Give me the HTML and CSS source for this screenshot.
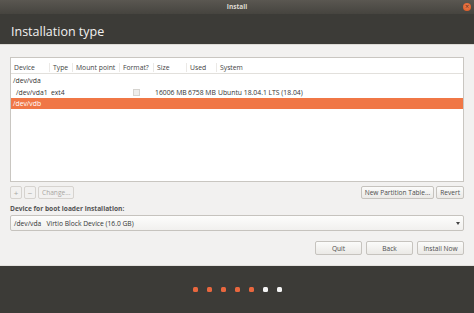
FILE: index.html
```html
<!DOCTYPE html>
<html lang="en">
<head>
    <meta charset="UTF-8">
    <title>Install</title>
    <link rel="stylesheet" href="styles.css">
</head>
<body>
    <div class="window">
        <div class="titlebar">
            <span class="title">Install</span>
            <span class="close">&times;</span>
        </div>
        <div class="header">
            <h1>Installation type</h1>
        </div>

        <div class="content">
            <div class="table">
                <div class="row head">
                    <span class="c-dev">Device</span>
                    <span class="c-type">Type</span>
                    <span class="c-mount">Mount point</span>
                    <span class="c-fmt">Format?</span>
                    <span class="c-size">Size</span>
                    <span class="c-used">Used</span>
                    <span class="c-sys">System</span>
                </div>
                <div class="row">
                    <span class="c-dev">/dev/vda</span>
                </div>
                <div class="row">
                    <span class="c-dev indent">/dev/vda1</span>
                    <span class="c-type">ext4</span>
                    <span class="c-mount"></span>
                    <span class="c-fmt"><i class="check"></i></span>
                    <span class="c-size">16006 MB</span>
                    <span class="c-used">6758 MB</span>
                    <span class="c-sys">Ubuntu 18.04.1 LTS (18.04)</span>
                </div>
                <div class="row selected">
                    <span class="c-dev">/dev/vdb</span>
                </div>
            </div>

            <div class="tools">
                <div class="left">
                    <button class="btn sq" disabled>+</button>
                    <button class="btn sq" disabled>&minus;</button>
                    <button class="btn" disabled>Change...</button>
                </div>
                <div class="right">
                    <button class="btn">New Partition Table...</button>
                    <button class="btn">Revert</button>
                </div>
            </div>

            <div class="label">Device for boot loader installation:</div>
            <div class="combo">
                <span>/dev/vda&nbsp;&nbsp;&nbsp;Virtio Block Device (16.0 GB)</span>
                <i class="arrow"></i>
            </div>

            <div class="actions">
                <button class="btn wide">Quit</button>
                <button class="btn wide">Back</button>
                <button class="btn wide">Install Now</button>
            </div>
        </div>

        <div class="footer">
            <i class="dot on"></i>
            <i class="dot on"></i>
            <i class="dot on"></i>
            <i class="dot on"></i>
            <i class="dot on"></i>
            <i class="dot"></i>
            <i class="dot"></i>
        </div>
    </div>
</body>
</html>
```

FILE: styles.css
```css
:root {
    --dark: #3c3b37;
    --light-bg: #f2f1f0;
    --border: #c9c6c1;
    --text: #333;
    --orange: #f07746;
}
html, body {
    margin: 0;
    padding: 0;
}
body {
    font-family: "Open Sans", "Noto Sans", sans-serif;
    color: var(--text);
    background: var(--light-bg);
}
.window {
    width: 474px;
    height: 313px;
    display: flex;
    flex-direction: column;
    overflow: hidden;
}
.titlebar {
    height: 14px;
    background: linear-gradient(#5a5751, #46443f);
    display: flex;
    justify-content: center;
    align-items: center;
    position: relative;
}
.titlebar .title {
    color: #dfdbd2;
    font-size: 6.5px;
    font-weight: bold;
}
.close {
    position: absolute;
    right: 3px;
    top: 3px;
    width: 8px;
    height: 8px;
    border-radius: 50%;
    background: radial-gradient(circle at 50% 40%, #f08050, #d9541f);
    color: #5a2a18;
    font-size: 7px;
    line-height: 8px;
    text-align: center;
}
.header {
    height: 31px;
    background: var(--dark);
    display: flex;
    align-items: center;
    padding-left: 11px;
}
.header h1 {
    margin: 0;
    color: #f2f1f0;
    font-size: 12.5px;
    font-weight: normal;
    margin-top: 5px;
}
.content {
    flex: 1;
    padding: 12px 10px 10px 10px;
    display: flex;
    flex-direction: column;
    border-top: 1px solid #dcdad5;
}
.table {
    height: 123px;
    background: #fff;
    border: 1px solid var(--border);
    font-size: 6.8px;
}
.row {
    display: flex;
    height: 12px;
    align-items: center;
}
.row.head {
    height: 16px;
    padding-top: 3px;
    box-sizing: border-box;
    border-bottom: 1px solid #e2e0dc;
    color: #444;
}
.row span {
    padding-left: 1px;
    box-sizing: border-box;
    white-space: nowrap;
}
.row.head span {
    padding-left: 3px;
}
.row .c-dev {
    padding-left: 2px;
}
.row .c-dev.indent {
    padding-left: 5px;
}
.c-dev { width: 39px; }
.c-type { width: 23px; }
.c-mount { width: 47px; }
.c-fmt { width: 34px; }
.c-size { width: 33px; }
.c-used { width: 30px; }
.c-sys { flex: 1; }
.head span {
    border-right: 1px solid #ebe9e6;
}
.head .c-sys { border-right: none; }
.c-fmt .check {
    display: block;
    width: 5px;
    height: 5px;
    margin-left: 12px;
    border: 1px solid #d6d4d0;
    background: #eeedeb;
}
.row.selected {
    height: 11px;
    background: var(--orange);
    color: #fff;
}
.tools {
    display: flex;
    justify-content: space-between;
    margin-top: 4px;
}
.tools .left, .tools .right, .actions {
    display: flex;
    gap: 2px;
}
.btn {
    font-family: inherit;
    font-size: 6.6px;
    color: #4c4c4c;
    height: 13px;
    padding: 0 3px;
    border: 1px solid #c6c3be;
    border-radius: 2px;
    background: linear-gradient(#fbfbfa, #ebe9e6);
    line-height: 11px;
}
.btn:disabled {
    color: #a8a6a2;
    background: #f2f1f0;
    border-color: #d6d3cf;
}
.btn.sq {
    width: 12px;
    padding: 0;
    font-size: 8px;
}
.label {
    margin-top: 5px;
    font-size: 6.6px;
    font-weight: bold;
    color: #555;
}
.combo {
    margin-top: 2px;
    height: 14px;
    border: 1px solid #c6c3be;
    border-radius: 2px;
    background: linear-gradient(#fdfdfc, #f1f0ee);
    display: flex;
    align-items: center;
    justify-content: space-between;
    padding: 0 3px;
    font-size: 6.7px;
}
.arrow {
    width: 0;
    height: 0;
    border-left: 2px solid transparent;
    border-right: 2px solid transparent;
    border-top: 3px solid #444;
}
.actions {
    justify-content: flex-end;
    margin-top: 10px;
    gap: 4px;
}
.btn.wide {
    width: 47px;
    height: 14px;
}
.footer {
    height: 48px;
    background: var(--dark);
    border-top: 1px solid #e4e2de;
    display: flex;
    justify-content: center;
    align-items: center;
    gap: 9px;
}
.dot {
    width: 5px;
    height: 5px;
    border-radius: 1.5px;
    background: #f4f4f4;
}
.dot.on {
    background: #e9673e;
}
```
